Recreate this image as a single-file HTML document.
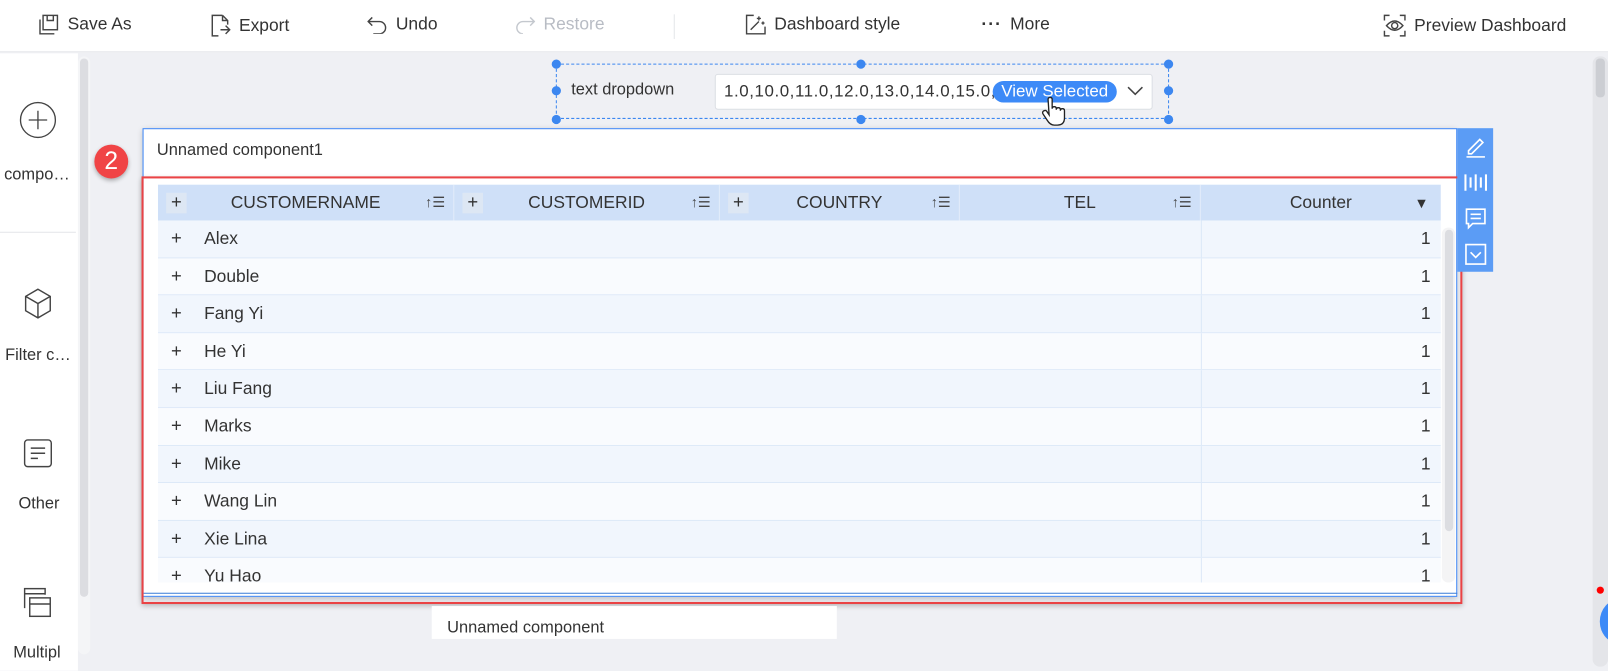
<!DOCTYPE html><html><head><meta charset="utf-8"><style>
*{box-sizing:border-box;margin:0;padding:0}
body{width:1608px;height:654px;overflow:hidden;background:#eff0f4;font-family:"Liberation Sans",Arial,sans-serif;color:#333;position:relative}
#w{position:absolute;left:0;top:0;width:1568px;height:638px;transform:scale(1.02551);transform-origin:0 0}
.a{position:absolute}
.top{left:0;top:0;width:1568px;height:51px;background:#fff;border-bottom:1px solid #e4e6ea}
.tb{top:14px;font-size:17px;color:#333;display:flex;align-items:center;gap:8px}
.side{left:0;top:52px;width:76px;height:602px;background:#fff}
.sl{font-size:16px;color:#333;width:76px;text-align:center}
.tbl{left:154px;top:180px;width:1251px;height:388px;overflow:hidden}
.hd{height:35px;background:#cfe0f8;display:flex;font-size:17px;color:#333}
.hd div{position:relative;border-right:1px solid #e2ecfa;display:flex;align-items:center;justify-content:center}
.pl{position:absolute;left:8px;top:8px;width:20px;height:20px;background:#dde7f4;font-size:18px;line-height:19px;text-align:center;color:#333}
.row{height:36.6px;display:flex;font-size:17px;border-bottom:1px solid #dde9f8}
.row .c1{width:1017px;position:relative;padding-left:45px;line-height:36px}
.row .c2{width:234px;border-left:1px solid #dde9f8;text-align:right;padding-right:10px;line-height:36px}
.row .pl{top:8px}
.h{width:9px;height:9px;border-radius:50%;background:#3c87f0}
.si{position:absolute;right:8px;font-size:14px;color:#444}
</style></head><body><div id="w">
<div class="a top"></div>
<div class="a tb" style="left:38px"><svg width="20" height="20" viewBox="0 0 20 20" fill="none" stroke="#444" stroke-width="1.4"><rect x="4" y="1" width="14" height="14"/><path d="M1 5v14h14M8 1v5h6V1"/></svg>Save As</div>
<div class="a tb" style="left:205px"><svg width="20" height="22" viewBox="0 0 20 22" fill="none" stroke="#444" stroke-width="1.4"><path d="M12 1H2v20h6M12 1l5 5v4M12 1v5h5M10 15h9M15 11l4 4-4 4"/></svg>Export</div>
<div class="a tb" style="left:358px"><svg width="20" height="18" viewBox="0 0 20 18" fill="none" stroke="#444" stroke-width="1.4"><path d="M5 2L1 6l4 4M1 6h11a6 6 0 010 12H6"/></svg>Undo</div>
<div class="a tb" style="left:502px;color:#b8bcc4"><svg width="20" height="18" viewBox="0 0 20 18" fill="none" stroke="#c4c8ce" stroke-width="1.4"><path d="M15 2l4 4-4 4M19 6H8a6 6 0 000 12"/></svg>Restore</div>
<div class="a" style="left:657px;top:14px;width:1px;height:24px;background:#e4e6ea"></div>
<div class="a tb" style="left:727px"><svg width="20" height="20" viewBox="0 0 20 20" fill="none" stroke="#444" stroke-width="1.4"><path d="M8 1H1v18h18v-7M5 15l8-8M13 2v4M11 4h4M17 7v3M15.5 8.5h3"/></svg>Dashboard style</div>
<div class="a tb" style="left:957px"><span style="letter-spacing:1px;font-weight:bold">···</span>More</div>
<div class="a tb" style="left:1349px"><svg width="22" height="22" viewBox="0 0 22 22" fill="none" stroke="#444" stroke-width="1.4"><path d="M1 6V1h5M16 1h5v5M21 16v5h-5M6 21H1v-5"/><path d="M3 11q8-9 16 0q-8 9-16 0z"/><circle cx="11" cy="11" r="3"/></svg>Preview Dashboard</div>

<div class="a side"></div>
<div class="a" style="left:76px;top:55px;width:12px;height:583px;background:#f4f5f7;border-radius:6px"></div>
<div class="a" style="left:78px;top:57px;width:8px;height:525px;background:#dcdde1;border-radius:4px"></div>
<svg class="a" style="left:19px;top:99px" width="36" height="36" viewBox="0 0 36 36" fill="none" stroke="#444" stroke-width="1.3"><circle cx="18" cy="18" r="17"/><path d="M18 9v18M9 18h18"/></svg>
<div class="a sl" style="top:162px;left:-2px">compo…</div>
<div class="a" style="left:0;top:226px;width:74px;height:1px;background:#e4e6ea"></div>
<svg class="a" style="left:23px;top:281px" width="28" height="30" viewBox="0 0 28 30" fill="none" stroke="#444" stroke-width="1.4"><path d="M14 1l12 7v14l-12 7-12-7V8zM2 8l12 7 12-7M14 15v14"/></svg>
<div class="a sl" style="top:338px;left:-1px">Filter c…</div>
<svg class="a" style="left:23px;top:428px" width="28" height="28" viewBox="0 0 28 28" fill="none" stroke="#444" stroke-width="1.4"><rect x="1" y="1" width="26" height="26" rx="3"/><path d="M7 9h14M7 14h14M7 19h7"/></svg>
<div class="a sl" style="top:483px">Other</div>
<svg class="a" style="left:23px;top:573px" width="28" height="30" viewBox="0 0 28 30" fill="none" stroke="#444" stroke-width="1.4"><path d="M1 20V1h20v6M1 6h20"/><rect x="6" y="10" width="20" height="18"/><path d="M6 16h20"/></svg>
<div class="a sl" style="top:628px;left:-2px">Multipl</div>

<div class="a" style="left:542px;top:62px;width:598px;height:54px;border:1px dashed #3c87f0"></div>
<div class="a h" style="left:538px;top:58px"></div><div class="a h" style="left:835px;top:58px"></div><div class="a h" style="left:1135px;top:58px"></div>
<div class="a h" style="left:538px;top:84px"></div><div class="a h" style="left:1135px;top:84px"></div>
<div class="a h" style="left:538px;top:112px"></div><div class="a h" style="left:835px;top:112px"></div><div class="a h" style="left:1135px;top:112px"></div>
<div class="a" style="left:557px;top:79px;font-size:16px">text dropdown</div>
<div class="a" style="left:697px;top:72px;width:427px;height:35px;background:#fff;border:1px solid #dcdfe4;border-radius:3px"></div>
<div class="a" style="left:706px;top:80px;font-size:16.5px;color:#333;letter-spacing:0.55px">1.0,10.0,11.0,12.0,13.0,14.0,15.0,</div>
<div class="a" style="left:968px;top:79px;width:121px;height:21px;background:#3d8af7;border-radius:11px;color:#fff;font-size:16.5px;text-align:center;line-height:21px">View Selected</div>
<svg class="a" style="left:1098px;top:83px" width="18" height="12" viewBox="0 0 18 12" fill="none" stroke="#444" stroke-width="1.5"><path d="M2 2l7 7 7-7"/></svg>
<svg class="a" style="left:1014px;top:94px" width="26" height="30" viewBox="0 0 26 30"><path d="M8 3q0-2 2-2t2 2v9q0-2 2-2t2 2v1q0-2 2-2t2 2v1q0-2 2-2t2 2v7q0 7-7 7h-3q-4 0-7-5l-4-6q-1-2 1-3t3 1l2 3z" fill="#fff" stroke="#222" stroke-width="1.3"/></svg>

<div class="a" style="left:139px;top:125px;width:1282px;height:457px;background:#fff;border:1px solid #3e86f5;box-shadow:0 2px 6px rgba(0,0,0,.2)"></div>
<div class="a" style="left:153px;top:138px;font-size:16px">Unnamed component1</div>
<div class="a" style="left:138px;top:172px;width:1288px;height:417px;border:2px solid #ea4345;box-shadow:0 2px 5px rgba(0,0,0,.25)"></div>
<div class="a" style="left:140px;top:578px;width:1281px;height:1px;background:#3e7fd8"></div>
<div class="a" style="left:92px;top:141px;width:33px;height:33px;border-radius:50%;background:#f04446;color:#fff;font-size:24px;text-align:center;line-height:33px;box-shadow:0 2px 4px rgba(0,0,0,.3)">2</div>
<div class="a" style="left:1421px;top:125px;width:35px;height:140px;background:#5b9cf5"></div>
<svg class="a" style="left:1428px;top:132px" width="22" height="22" viewBox="0 0 22 22" fill="none" stroke="#fff" stroke-width="1.6"><path d="M4 15L15 4l3 3L7 18H4zM2 21h18"/></svg>
<svg class="a" style="left:1427px;top:168px" width="24" height="20" viewBox="0 0 24 20" fill="none" stroke="#fff" stroke-width="2"><path d="M2 2v16M22 2v16M7 5v10M17 5v10M12 2v16"/></svg>
<svg class="a" style="left:1428px;top:202px" width="22" height="22" viewBox="0 0 22 22" fill="none" stroke="#fff" stroke-width="1.6"><path d="M2 2h18v14H8l-4 4v-4H2z"/><path d="M6 7h10M6 11h10"/></svg>
<svg class="a" style="left:1428px;top:237px" width="22" height="22" viewBox="0 0 22 22" fill="none" stroke="#fff" stroke-width="1.6"><rect x="1.5" y="1.5" width="19" height="19"/><path d="M6 9l5 5 5-5"/></svg>

<div class="a tbl">
<div class="hd">
<div style="width:289px"><span class="pl">+</span>CUSTOMERNAME<span class="si">↑☰</span></div>
<div style="width:259px"><span class="pl">+</span>CUSTOMERID<span class="si">↑☰</span></div>
<div style="width:234px"><span class="pl">+</span>COUNTRY<span class="si">↑☰</span></div>
<div style="width:235px">TEL<span class="si">↑☰</span></div>
<div style="width:234px;border:none">Counter<span style="position:absolute;right:12px;font-size:14px">▼</span></div>
</div>
<div class="row" style="background:#f1f6fd"><div class="c1"><span class="pl" style="left:8px;background:none">+</span>Alex</div><div class="c2">1</div></div>
<div class="row" style="background:#f9fbfe"><div class="c1"><span class="pl" style="left:8px;background:none">+</span>Double</div><div class="c2">1</div></div>
<div class="row" style="background:#f1f6fd"><div class="c1"><span class="pl" style="left:8px;background:none">+</span>Fang Yi</div><div class="c2">1</div></div>
<div class="row" style="background:#f9fbfe"><div class="c1"><span class="pl" style="left:8px;background:none">+</span>He Yi</div><div class="c2">1</div></div>
<div class="row" style="background:#f1f6fd"><div class="c1"><span class="pl" style="left:8px;background:none">+</span>Liu Fang</div><div class="c2">1</div></div>
<div class="row" style="background:#f9fbfe"><div class="c1"><span class="pl" style="left:8px;background:none">+</span>Marks</div><div class="c2">1</div></div>
<div class="row" style="background:#f1f6fd"><div class="c1"><span class="pl" style="left:8px;background:none">+</span>Mike</div><div class="c2">1</div></div>
<div class="row" style="background:#f9fbfe"><div class="c1"><span class="pl" style="left:8px;background:none">+</span>Wang Lin</div><div class="c2">1</div></div>
<div class="row" style="background:#f1f6fd"><div class="c1"><span class="pl" style="left:8px;background:none">+</span>Xie Lina</div><div class="c2">1</div></div>
<div class="row" style="background:#f9fbfe"><div class="c1"><span class="pl" style="left:8px;background:none">+</span>Yu Hao</div><div class="c2">1</div></div>
</div>
<div class="a" style="left:1406px;top:222px;width:13px;height:346px;background:#f4f4f5;border-radius:6px"></div>
<div class="a" style="left:1409px;top:224px;width:8px;height:294px;background:#dcdde1;border-radius:4px"></div>

<div class="a" style="left:421px;top:591px;width:395px;height:32px;background:#fff"></div>
<div class="a" style="left:436px;top:604px;font-size:16px">Unnamed component</div>

<div class="a" style="left:1553px;top:55px;width:15px;height:595px;background:#e4e5e9;border-radius:7px"></div>
<div class="a" style="left:1556px;top:57px;width:9px;height:38px;background:#ccced3;border-radius:4px"></div>
<div class="a" style="left:1560px;top:584px;width:40px;height:44px;border-radius:50%;background:#3d8af7"></div>
<div class="a" style="left:1557px;top:572px;width:7px;height:7px;border-radius:50%;background:#f00"></div>
</div></body></html>
